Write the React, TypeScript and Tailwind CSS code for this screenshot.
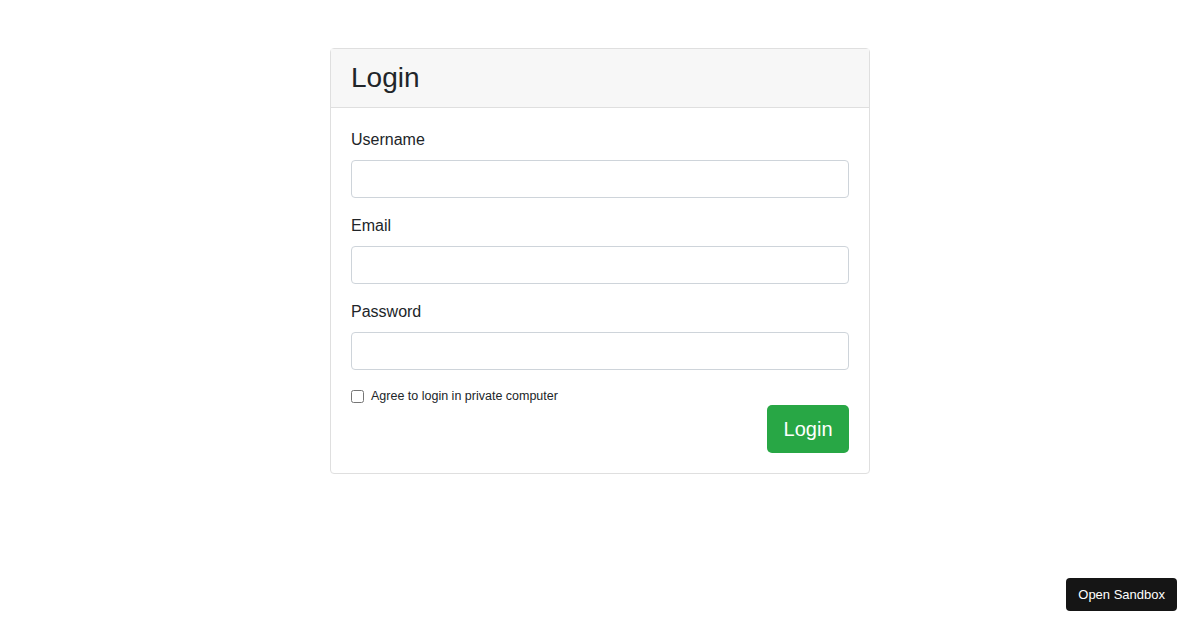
export default function App() {
  return (
    <div className="min-h-screen bg-white font-['Liberation_Sans',Arial,sans-serif] text-[#212529]">
      <div className="mx-auto w-[540px] pt-12">
        {/* Card */}
        <div className="rounded-[4px] border border-[#dfdfdf]">
          <div className="border-b border-[#dfdfdf] bg-[#f7f7f7] px-5 py-3">
            <h3 className="text-[28px] leading-[1.2] font-normal">Login</h3>
          </div>

          <form className="p-5" onSubmit={(e) => e.preventDefault()}>
            <Field label="Username" type="text" />
            <Field label="Email" type="email" />
            <Field label="Password" type="password" />

            <label className="flex h-[19px] items-center gap-[7px] pt-[3px] text-[12.5px]">
              <input type="checkbox" className="h-[13px] w-[13px] rounded-[2px]" />
              <span>Agree to login in private computer</span>
            </label>

            <div className="flex justify-end">
              <button
                type="submit"
                className="h-[48px] rounded-[5px] bg-[#28a745] px-[16.5px] text-[20px] leading-[1.5] text-white"
              >
                Login
              </button>
            </div>
          </form>
        </div>
      </div>

      <button className="fixed right-[23px] bottom-[19px] h-[33px] rounded-[4px] bg-[#151515] px-3 text-[13px] text-white">
        Open Sandbox
      </button>
    </div>
  );
}

function Field({ label, type }: { label: string; type: string }) {
  return (
    <div className="mb-4">
      <label className="mb-2 block text-[16px] leading-6">{label}</label>
      <input
        type={type}
        className="block h-[38px] w-full rounded-[4px] border border-[#ced4da] px-3 text-[16px] outline-none"
      />
    </div>
  );
}
